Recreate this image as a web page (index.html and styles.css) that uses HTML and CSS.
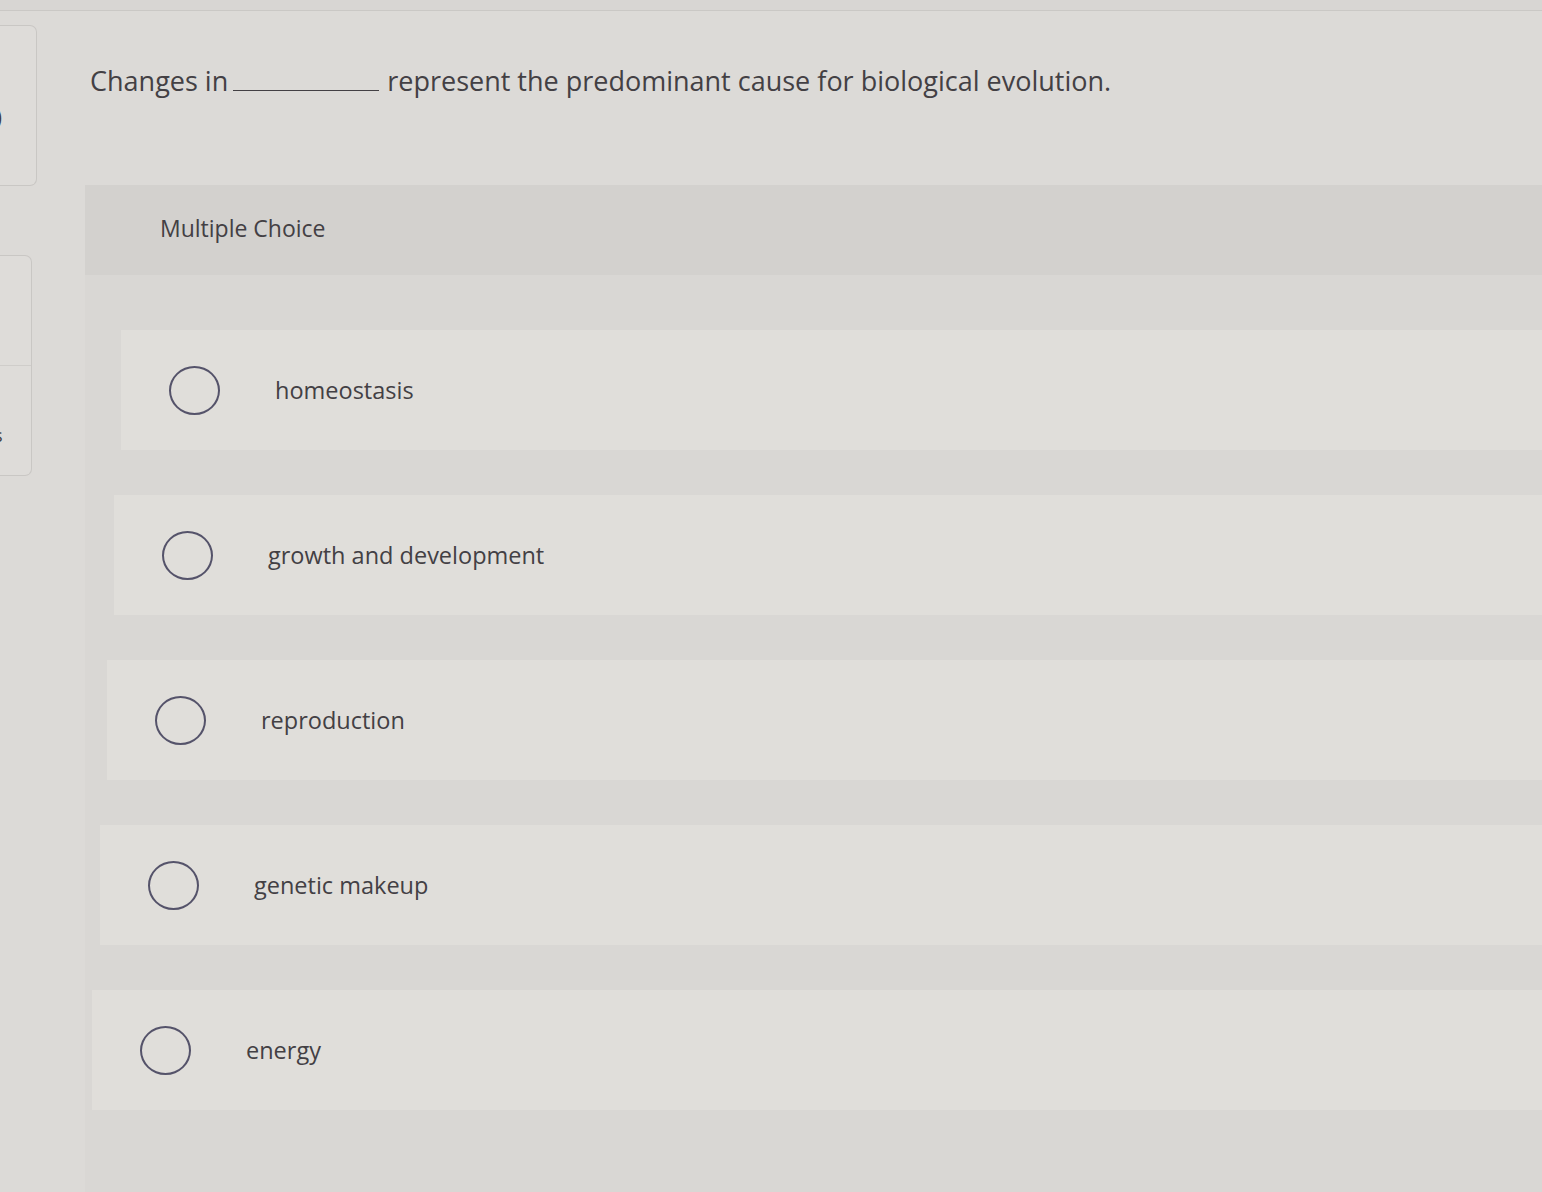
FILE: index.html
```html
<!DOCTYPE html>
<html lang="en">
<head>
<meta charset="utf-8">
<title>Multiple Choice</title>
<link rel="stylesheet" href="styles.css">
</head>
<body>
<div class="topbar"></div>
<div class="layout">
  <aside class="sidebar">
    <div class="side-box side-box-a"><span class="side-glyph">)</span></div>
    <div class="side-box side-box-b">
      <div class="side-cell"></div>
      <div class="side-cell"><span class="side-glyph small">s</span></div>
    </div>
  </aside>
  <main class="main">
    <p class="question">Changes in<span class="blank"></span>represent the predominant cause for biological evolution.</p>
    <section class="panel">
      <div class="panel-head">Multiple Choice</div>
      <ul class="options">
        <li class="option"><span class="radio"></span><span class="label">homeostasis</span></li>
        <li class="option"><span class="radio"></span><span class="label">growth and development</span></li>
        <li class="option"><span class="radio"></span><span class="label">reproduction</span></li>
        <li class="option"><span class="radio"></span><span class="label">genetic makeup</span></li>
        <li class="option"><span class="radio"></span><span class="label">energy</span></li>
      </ul>
    </section>
  </main>
</div>
</body>
</html>
```
FILE: styles.css
```css
* { box-sizing: border-box; }
html, body { height: 100%; }
body {
  margin: 0;
  background: #dcdad7;
  font-family: "Open Sans", Lato, "Liberation Sans", sans-serif;
  color: #434044;
  overflow: hidden;
}
.topbar {
  height: 11px;
  background: #d8d6d3;
  border-bottom: 1px solid #cac8c5;
}
.layout {
  display: grid;
  grid-template-columns: 40px 1fr;
  height: calc(100% - 11px);
}
.sidebar {
  display: flex;
  flex-direction: column;
  padding-top: 14px;
}
.side-box {
  border: 1px solid #c9c7c4;
  border-left: none;
  border-radius: 0 7px 7px 0;
  background: #dedcd9;
  overflow: hidden;
  position: relative;
}
.side-box-a {
  width: 37px;
  height: 161px;
}
.side-box-b {
  margin-top: 69px;
  width: 32px;
  height: 221px;
  display: flex;
  flex-direction: column;
}
.side-cell { flex: 1; }
.side-cell + .side-cell { border-top: 1px solid #cfcdca; }
.side-glyph {
  position: absolute;
  left: -5px;
  top: 76px;
  font-size: 24px;
  line-height: 28px;
  color: #3f3d41;
}
.side-glyph.small {
  top: 168px;
  left: -6px;
  font-size: 18px;
  line-height: 22px;
}
.main {
  display: flex;
  flex-direction: column;
  min-width: 0;
}
.question {
  margin: 0;
  padding: 52px 0 0 50px;
  height: 174px;
  font-size: 27px;
  line-height: 36px;
  color: #434044;
  white-space: nowrap;
}
.blank {
  display: inline-block;
  width: 146px;
  height: 1px;
  border-bottom: 1.5px solid #434044;
  vertical-align: 0;
  margin: 0 8px 0 5px;
}
.panel {
  margin-left: 45px;
  flex: 1;
  background: #d9d7d4;
  display: flex;
  flex-direction: column;
}
.panel-head {
  height: 90px;
  background: #d3d1ce;
  padding: 28px 0 0 75px;
  font-size: 23px;
  line-height: 30px;
  color: #434044;
}
.options {
  list-style: none;
  margin: 0;
  padding: 55px 0 0 0;
  display: flex;
  flex-direction: column;
  gap: 45px;
}
.option {
  height: 120px;
  background: #e0deda;
  display: flex;
  align-items: center;
  padding-left: 48px;
}
.option:nth-child(1) { margin-left: 36px; }
.option:nth-child(2) { margin-left: 29px; }
.option:nth-child(3) { margin-left: 22px; }
.option:nth-child(4) { margin-left: 15px; }
.option:nth-child(5) { margin-left: 7px; }
.radio {
  width: 51px;
  height: 49px;
  border: 2px solid #55536a;
  border-radius: 50%;
  flex: none;
}
.label {
  margin-left: 55px;
  font-size: 23.5px;
  line-height: 30px;
  color: #434044;
}
```
